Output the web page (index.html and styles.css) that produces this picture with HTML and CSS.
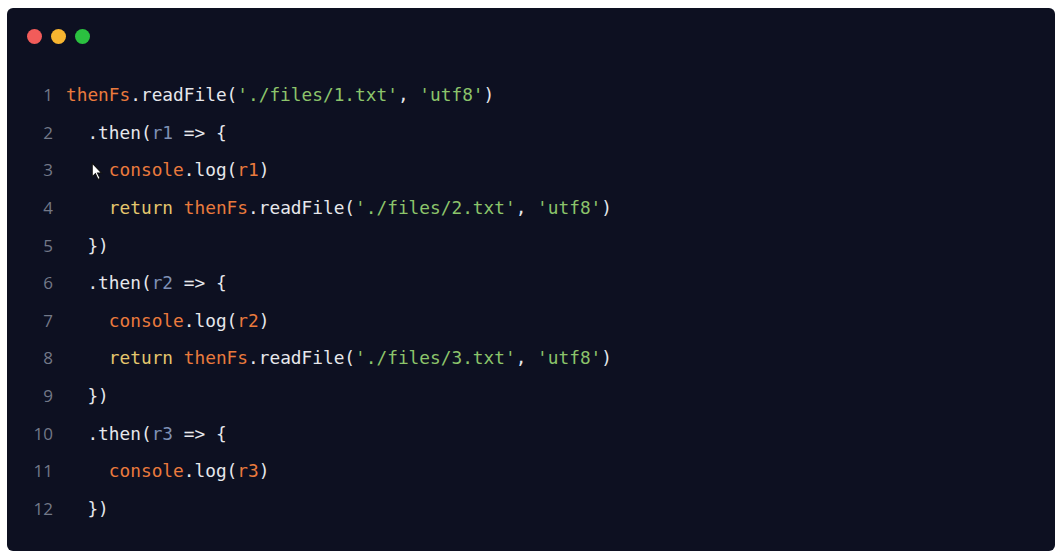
FILE: index.html
```html
<!DOCTYPE html>
<html lang="en">
<head>
<meta charset="utf-8">
<title>Code</title>
<link rel="stylesheet" href="styles.css">
</head>
<body>
<div class="card">
  <div class="dots">
    <span class="dot red"></span>
    <span class="dot yellow"></span>
    <span class="dot green"></span>
  </div>
  <div class="code">
    <div class="row"><span class="ln">1</span><span class="src"><span class="fn">thenFs</span>.readFile(<span class="str">'./files/1.txt'</span>, <span class="str">'utf8'</span>)</span></div>
    <div class="row"><span class="ln">2</span><span class="src">  .then(<span class="par">r1</span> =&gt; {</span></div>
    <div class="row"><span class="ln">3</span><span class="src">    <span class="fn">console</span>.log(<span class="fn">r1</span>)</span>
      <svg class="cursor" width="13" height="19" viewBox="0 0 12 18"><path d="M1 1 L1 14 L4 11 L6.5 16.5 L8.5 15.5 L6 10.5 L10 10.5 Z" fill="#ffffff" stroke="#111" stroke-width="1"/></svg>
    </div>
    <div class="row"><span class="ln">4</span><span class="src">    <span class="kw">return</span> <span class="fn">thenFs</span>.readFile(<span class="str">'./files/2.txt'</span>, <span class="str">'utf8'</span>)</span></div>
    <div class="row"><span class="ln">5</span><span class="src">  })</span></div>
    <div class="row"><span class="ln">6</span><span class="src">  .then(<span class="par">r2</span> =&gt; {</span></div>
    <div class="row"><span class="ln">7</span><span class="src">    <span class="fn">console</span>.log(<span class="fn">r2</span>)</span></div>
    <div class="row"><span class="ln">8</span><span class="src">    <span class="kw">return</span> <span class="fn">thenFs</span>.readFile(<span class="str">'./files/3.txt'</span>, <span class="str">'utf8'</span>)</span></div>
    <div class="row"><span class="ln">9</span><span class="src">  })</span></div>
    <div class="row"><span class="ln">10</span><span class="src">  .then(<span class="par">r3</span> =&gt; {</span></div>
    <div class="row"><span class="ln">11</span><span class="src">    <span class="fn">console</span>.log(<span class="fn">r3</span>)</span></div>
    <div class="row"><span class="ln">12</span><span class="src">  })</span></div>
  </div>
</div>
</body>
</html>
```
FILE: styles.css
```css
html, body {
  margin: 0;
  padding: 0;
  background: #ffffff;
}
body {
  width: 1057px;
  height: 553px;
  overflow: hidden;
}
.card {
  margin: 8px 2px 0 7px;
  height: 543px;
  background: #0d1021;
  border-radius: 6px;
  display: flex;
  flex-direction: column;
  box-sizing: border-box;
  padding-top: 21px;
}
.dots {
  display: flex;
  gap: 9px;
  padding-left: 20px;
}
.dot {
  width: 15px;
  height: 15px;
  border-radius: 50%;
  display: block;
}
.red { background: #f25c5a; }
.yellow { background: #f7b530; }
.green { background: #2bc140; }
.code {
  margin-top: 32px;
  display: flex;
  flex-direction: column;
}
.row {
  position: relative;
  display: flex;
  align-items: center;
  height: 37.6px;
}
.ln {
  width: 46px;
  text-align: right;
  font-family: "Open Sans", sans-serif;
  font-size: 17px;
  color: #737888;
  flex: none;
}
.src {
  margin-left: 13px;
  white-space: pre;
  font-family: "DejaVu Sans Mono", monospace;
  font-size: 17.8px;
  color: #e6e7ec;
}
.fn { color: #ea7a3d; }
.str { color: #8cc46b; }
.kw { color: #e4c66e; }
.par { color: #7f90b5; }
.cursor {
  position: absolute;
  left: 84px;
  top: 11px;
}
```
